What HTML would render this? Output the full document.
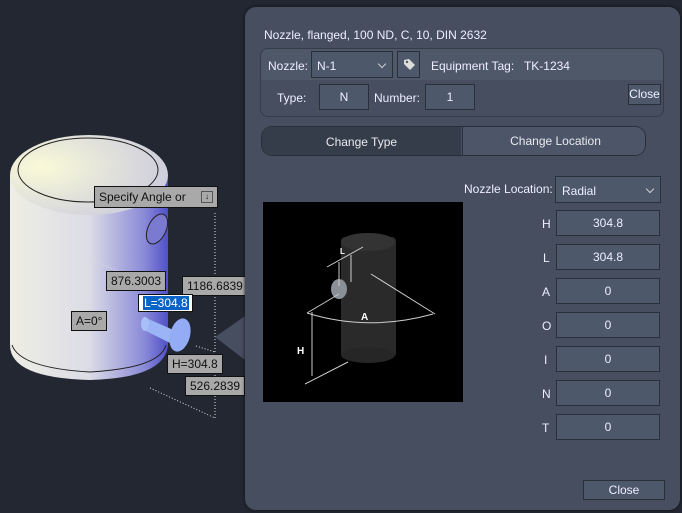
<!DOCTYPE html>
<html><head><style>
body{margin:0;width:682px;height:513px;background:#222731;position:relative;overflow:hidden;font-family:"Liberation Sans",sans-serif;font-size:12px;color:#e8eaee}
.a{position:absolute}
.panel{left:245px;top:7px;width:435px;height:503px;background:#464e5f;border-radius:11px;box-shadow:0 0 3px #111}
.f{position:absolute;background:#4d586b;border:1px solid #2a303a;box-sizing:border-box;text-align:center;color:#eef}
.lbl{position:absolute;color:#eef}
.dim{position:absolute;background:#a9a9a9;border:1px solid #111;color:#111;font-size:12px;line-height:18px;padding:0 4px;box-sizing:border-box}
.chev{position:absolute;right:7px;top:9px;width:5px;height:5px;border-right:1px solid #ccc;border-bottom:1px solid #ccc;transform:rotate(45deg)}
</style></head><body>
<svg class="a" style="left:0;top:0" width="245" height="513">
<defs>
<linearGradient id="g" x1="0" x2="1"><stop offset="0" stop-color="#eeeee4"/><stop offset="0.5" stop-color="#dcdce6"/><stop offset="0.85" stop-color="#8a8ad8"/><stop offset="1" stop-color="#5050c8"/></linearGradient>
<radialGradient id="t" cx="0.2" cy="0.4" r="0.9"><stop offset="0" stop-color="#fafad8"/><stop offset="1" stop-color="#c8c8de"/></radialGradient>
</defs>
<path d="M10 175 L10 345 Q10 378 90 380 Q165 378 168 345 L168 175 Z" fill="url(#g)"/>
<ellipse cx="89" cy="175" rx="79" ry="40" fill="url(#t)"/>
<ellipse cx="88" cy="170" rx="70" ry="32" fill="none" stroke="#222" stroke-width="1"/>
<path d="M12 345 Q20 368 90 372 Q160 368 166 345" fill="none" stroke="#222"/>
<ellipse cx="157" cy="229" rx="9" ry="16" transform="rotate(25 157 229)" fill="#7a7ad0" stroke="#222"/>
<path d="M146 318 L178 332 L172 344 L144 330 Z" fill="#9ab4f6"/>
<ellipse cx="145" cy="324" rx="4" ry="7" fill="#a8c0f8"/>
<ellipse cx="180" cy="335" rx="10" ry="17" transform="rotate(15 180 335)" fill="#94acf6"/>
<g stroke="#ddd" stroke-dasharray="1,2" fill="none">
<path d="M215 213 L215 418"/><path d="M89 259 L165 290"/><path d="M89 260 L89 295"/><path d="M150 388 L215 418"/><path d="M196 346 L215 352"/>
</g>
<path d="M215 337 L245 316 L245 360 Z" fill="#464e5f"/>
</svg>
<div class="dim" style="left:94px;top:186px;width:124px;height:22px;line-height:20px">Specify Angle or<span style="position:absolute;right:4px;top:4px;width:10px;height:10px;border:1px solid #555;font-size:8px;line-height:10px;text-align:center">↓</span></div>
<div class="dim" style="left:106px;top:271px">876.3003</div>
<div class="dim" style="left:182px;top:276px">1186.6839</div>
<div class="a" style="left:138px;top:294px;width:55px;height:18px;background:#fff;border:1px solid #111;box-sizing:border-box"><span style="background:#0a64c8;color:#fff;margin-left:4px;padding:0 1px;line-height:16px">L=304.8</span></div>
<div class="dim" style="left:71px;top:311px">A=0°</div>
<div class="dim" style="left:167px;top:354px">H=304.8</div>
<div class="dim" style="left:185px;top:376px">526.2839</div>

<div class="a panel"></div>
<div class="lbl" style="left:264px;top:28px">Nozzle, flanged, 100 ND, C, 10, DIN 2632</div>
<div class="a" style="left:260px;top:48px;width:404px;height:69px;border:1px solid #353b47;border-radius:8px;box-sizing:border-box;background:#464e5f"></div>
<div class="a" style="left:261px;top:49px;width:402px;height:31px;background:#4f5869;border-radius:7px 7px 0 0"></div>
<div class="lbl" style="left:268px;top:59px">Nozzle:</div>
<div class="f" style="left:311px;top:51px;width:82px;height:27px;text-align:left;padding:7px 0 0 5px">N-1<span class="chev"></span></div>
<div class="f" style="left:397px;top:51px;width:23px;height:27px"><svg width="16" height="16" style="margin-top:4px"><path d="M3 4 L8 3 L14 9 L9 14 L3 8 Z" fill="#ddd"/><circle cx="6" cy="6" r="1.2" fill="#4d586b"/></svg></div>
<div class="lbl" style="left:431px;top:59px">Equipment Tag:&nbsp;&nbsp; TK-1234</div>
<div class="lbl" style="left:277px;top:91px">Type:</div>
<div class="f" style="left:319px;top:84px;width:50px;height:26px;line-height:24px">N</div>
<div class="lbl" style="left:374px;top:91px">Number:</div>
<div class="f" style="left:425px;top:84px;width:50px;height:26px;line-height:24px">1</div>
<div class="f" style="left:628px;top:84px;width:33px;height:21px;line-height:19px;font-size:12px">Close</div>

<div class="a" style="left:261px;top:126px;width:385px;height:30px;border:1px solid #2a303a;border-radius:11px;overflow:hidden;box-sizing:border-box">
<div class="a" style="left:0;top:0;width:199px;height:28px;background:#363d4a;text-align:center;line-height:30px">Change Type</div>
<div class="a" style="left:200px;top:0;width:185px;height:28px;background:#4d5669;text-align:center;line-height:28px;border-left:1px solid #2a303a">Change Location</div>
</div>

<div class="lbl" style="left:464px;top:182px">Nozzle Location:</div>
<div class="f" style="left:555px;top:176px;width:106px;height:27px;text-align:left;padding:7px 0 0 6px">Radial<span class="chev"></span></div>

<svg class="a" style="left:263px;top:202px" width="200" height="200">
<rect width="200" height="200" fill="#000"/>
<rect x="78" y="35" width="55" height="120" rx="4" fill="#2a2a2a"/>
<ellipse cx="105" cy="40" rx="27" ry="9" fill="#333"/>
<ellipse cx="105" cy="153" rx="27" ry="8" fill="#262626"/>
<ellipse cx="76" cy="87" rx="8" ry="10" fill="#8a9098"/>
<g stroke="#ccc" fill="none" stroke-width="1">
<path d="M44 111 Q105 130 170 112"/><path d="M44 111 L76 92"/><path d="M108 72 L172 112"/>
<path d="M49 110 L49 174"/><path d="M42 182 L85 160"/><path d="M64 65 L100 45"/><path d="M76 60 L76 84"/><path d="M88 53 L88 80"/>
</g>
<text x="98" y="118" fill="#fff" font-size="10" font-weight="bold">A</text>
<text x="34" y="152" fill="#fff" font-size="10" font-weight="bold">H</text>
<text x="77" y="52" fill="#fff" font-size="8" font-weight="bold">L</text>
</svg>

<div class="lbl" style="left:542px;top:217px">H</div><div class="f" style="left:556px;top:210px;width:104px;height:26px;line-height:24px">304.8</div>
<div class="lbl" style="left:543px;top:251px">L</div><div class="f" style="left:556px;top:244px;width:104px;height:26px;line-height:24px">304.8</div>
<div class="lbl" style="left:542px;top:285px">A</div><div class="f" style="left:556px;top:278px;width:104px;height:26px;line-height:24px">0</div>
<div class="lbl" style="left:542px;top:319px">O</div><div class="f" style="left:556px;top:312px;width:104px;height:26px;line-height:24px">0</div>
<div class="lbl" style="left:544px;top:353px">I</div><div class="f" style="left:556px;top:346px;width:104px;height:26px;line-height:24px">0</div>
<div class="lbl" style="left:542px;top:387px">N</div><div class="f" style="left:556px;top:380px;width:104px;height:26px;line-height:24px">0</div>
<div class="lbl" style="left:542px;top:421px">T</div><div class="f" style="left:556px;top:414px;width:104px;height:26px;line-height:24px">0</div>
<div class="f" style="left:583px;top:480px;width:82px;height:20px;line-height:18px">Close</div>
</body></html>
